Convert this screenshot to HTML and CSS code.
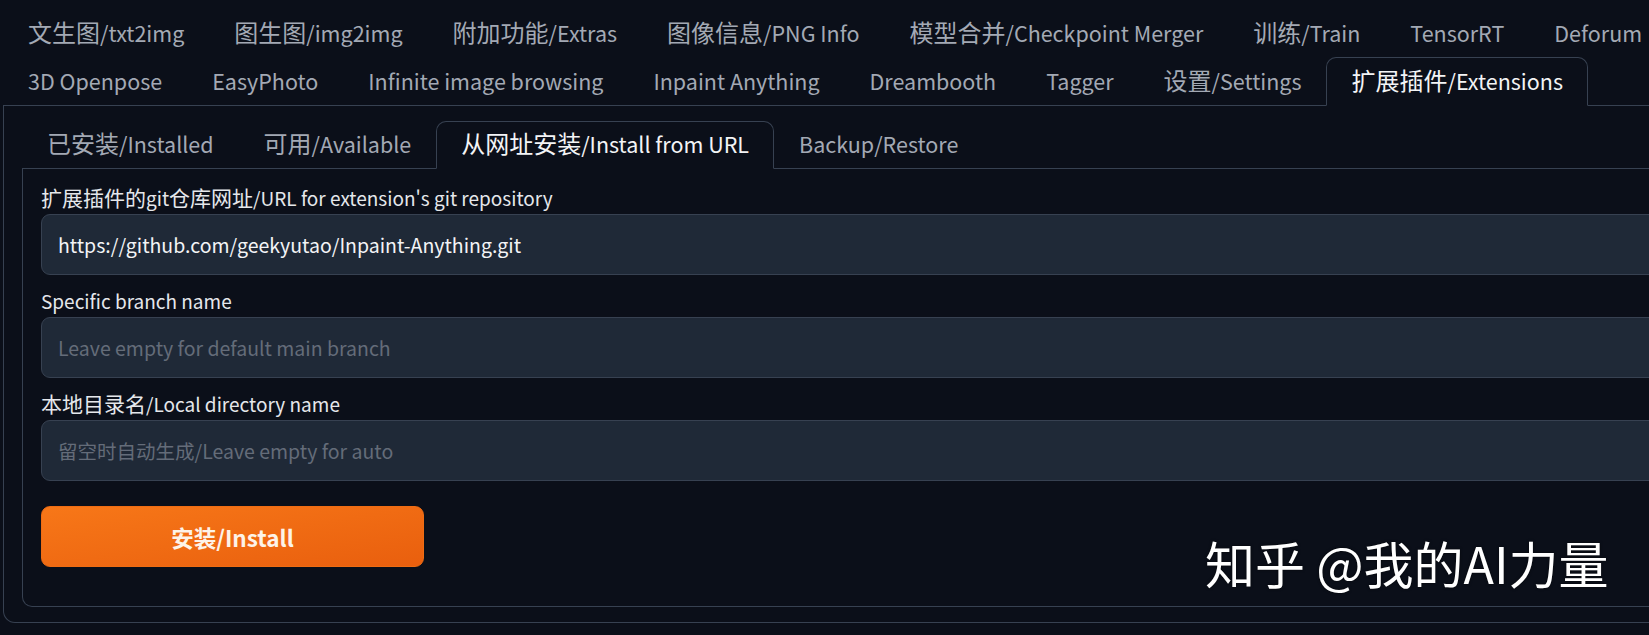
FILE: index.html
```html
<!DOCTYPE html>
<html lang="zh">
<head>
<meta charset="utf-8">
<title>Extensions</title>
<link rel="stylesheet" href="styles.css">
</head>
<body>
<div class="page">
  <nav class="main-nav">
    <div class="nav-row">
      <button class="tab"><span class="zh">文生图</span>/txt2img</button>
      <button class="tab"><span class="zh">图生图</span>/img2img</button>
      <button class="tab"><span class="zh">附加功能</span>/Extras</button>
      <button class="tab"><span class="zh">图像信息</span>/PNG Info</button>
      <button class="tab"><span class="zh">模型合并</span>/Checkpoint Merger</button>
      <button class="tab"><span class="zh">训练</span>/Train</button>
      <button class="tab">TensorRT</button>
      <button class="tab">Deforum</button>
    </div>
    <div class="nav-row">
      <button class="tab">3D Openpose</button>
      <button class="tab">EasyPhoto</button>
      <button class="tab">Infinite image browsing</button>
      <button class="tab">Inpaint Anything</button>
      <button class="tab">Dreambooth</button>
      <button class="tab">Tagger</button>
      <button class="tab"><span class="zh">设置</span>/Settings</button>
      <button class="tab selected"><span class="zh">扩展插件</span>/Extensions</button>
    </div>
  </nav>
  <section class="tab-body outer">
    <nav class="sub-nav">
      <button class="tab"><span class="zh">已安装</span>/Installed</button>
      <button class="tab"><span class="zh">可用</span>/Available</button>
      <button class="tab selected"><span class="zh">从网址安装</span>/Install from URL</button>
      <button class="tab">Backup/Restore</button>
    </nav>
    <div class="tab-body inner">
      <label class="field">
        <span class="field-label"><span class="zh">扩展插件的</span>git<span class="zh">仓库网址</span>/URL for extension's git repository</span>
        <input class="text-input" type="text" value="https://github.com/geekyutao/Inpaint-Anything.git">
      </label>
      <label class="field">
        <span class="field-label">Specific branch name</span>
        <input class="text-input" type="text" placeholder="Leave empty for default main branch">
      </label>
      <label class="field">
        <span class="field-label"><span class="zh">本地目录名</span>/Local directory name</span>
        <input class="text-input" type="text" placeholder="留空时自动生成/Leave empty for auto">
      </label>
      <button class="primary-btn">安装/Install</button>
    </div>
  </section>
  <div class="watermark">知乎 @我的AI力量</div>
</div>
</body>
</html>
```

FILE: styles.css
```css
* {
  box-sizing: border-box;
}

html, body {
  margin: 0;
  padding: 0;
  background: #0b0f19;
  overflow: hidden;
}

body {
  width: 1649px;
  height: 635px;
  font-family: "Noto Sans CJK SC", "Noto Sans", sans-serif;
  color: #e5e7eb;
}

.page {
  position: relative;
  width: 1780px;
  padding: 9px 0 0 3px;
}

.main-nav {
  border-bottom: 1px solid #374151;
  width: 1777px;
}

.nav-row,
.sub-nav {
  display: flex;
  align-items: flex-start;
}

.tab {
  flex: none;
  height: 48px;
  font-family: inherit;
  font-size: 21.5px;
  line-height: 36px;
  padding: 5px 24px;
  margin: 0;
  border: 1px solid transparent;
  border-radius: 10px 10px 0 0;
  background: transparent;
  color: #a3a9b4;
  white-space: nowrap;
  cursor: pointer;
}

.zh {
  line-height: 1;
}

.tab .zh {
  font-size: 24px;
}

.tab.selected {
  height: 49px;
  color: #f3f4f6;
  border-color: #374151;
  border-bottom-color: transparent;
  background: #0b0f19;
  padding-bottom: 6px;
  margin-bottom: -1px;
}

.tab-body {
  border: 1px solid #374151;
  border-top: none;
}

.outer {
  width: 1777px;
  padding: 15px 0 15px 18px;
  border-radius: 0 0 12px 12px;
}

.sub-nav {
  border-bottom: 1px solid #374151;
}

.sub-nav .tab {
  height: 47px;
  padding-top: 4px;
}

.sub-nav .tab.selected {
  height: 48px;
}

.inner {
  padding: 13px 0 39px 18px;
  border-radius: 0 0 10px 10px;
  display: flex;
  flex-direction: column;
  align-items: flex-start;
  gap: 10px;
}

.field {
  display: flex;
  flex-direction: column;
  width: 100%;
  padding-right: 18px;
}

.field-label {
  height: 32px;
  font-size: 19px;
  line-height: 32px;
  color: #e5e7eb;
  white-space: nowrap;
}

.field-label .zh {
  font-size: 21px;
}

.text-input {
  height: 61px;
  width: 100%;
  padding: 0 16px;
  border: 1px solid #374151;
  border-radius: 9px;
  background: #1f2937;
  color: #f3f4f6;
  font-family: inherit;
  font-size: 19.5px;
  outline: none;
}

.text-input::placeholder {
  color: #646c79;
}

.primary-btn {
  margin-top: 15px;
  width: 383px;
  height: 61px;
  border: 1px solid #ef6c13;
  border-radius: 9px;
  background: linear-gradient(to bottom right, #f77718, #e95f0e);
  color: #fdf3e8;
  font-family: inherit;
  font-size: 22.5px;
  font-weight: 700;
  cursor: pointer;
}

.watermark {
  position: absolute;
  left: 1205px;
  top: 537px;
  font-size: 50px;
  line-height: 1;
  color: #ffffff;
  white-space: nowrap;
  text-shadow: 0 0 3px rgba(0, 0, 0, 0.6);
}
```
